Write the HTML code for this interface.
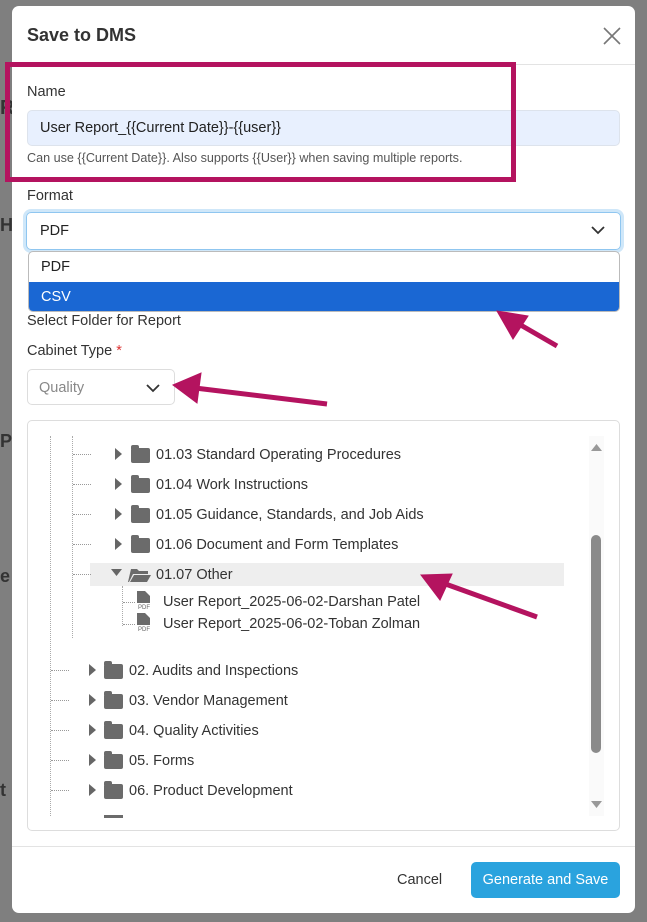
<!DOCTYPE html>
<html><head><meta charset="utf-8"><style>
*{box-sizing:border-box;margin:0;padding:0}
body{width:647px;height:922px;background:#7f7f7f;position:relative;overflow:hidden;font-family:"Liberation Sans",sans-serif;color:#222}
.a{position:absolute;white-space:nowrap}
.bg{position:absolute;left:0;font-size:15px;color:#333;font-weight:bold}
.modal{position:absolute;left:12px;top:6px;width:623px;height:907px;background:#fff;border-radius:7px}
.lbl{font-size:14.5px;color:#333}
.row{position:absolute;font-size:14.5px;color:#333;white-space:nowrap}
.tri{position:absolute;width:0;height:0;border-top:6px solid transparent;border-bottom:6px solid transparent;border-left:7px solid #666}
.fold{position:absolute;width:19px;height:15px;background:#6b6b6b;border-radius:2px}
.fold:before{content:"";position:absolute;left:0;top:-3px;width:8px;height:4px;background:#6b6b6b;border-radius:2px 2px 0 0}
.hd{position:absolute;border-top:1px dotted #999;width:18px}
</style></head><body>
<div class="bg" style="top:97px;font-size:20px">R</div>
<div class="bg" style="top:215px;font-size:18px">H</div>
<div class="bg" style="top:431px;font-size:18px">P</div>
<div class="bg" style="top:566px;font-size:18px">e</div>
<div class="bg" style="top:780px;font-size:18px">t</div>
<div class="modal"></div>
<div class="a" style="left:27px;top:25px;font-size:18px;font-weight:bold;color:#333">Save to DMS</div>
<svg class="a" style="left:603px;top:27px" width="18" height="18"><path d="M1 1L17 17M17 1L1 17" stroke="#777" stroke-width="1.6"/></svg>
<div class="a" style="left:12px;top:64px;width:623px;height:1px;background:#e3e3e3"></div>

<div class="a lbl" style="left:27px;top:84px">Name</div>
<div class="a" style="left:27px;top:110px;width:593px;height:36px;background:#e8f0fe;border:1px solid #dde3ec;border-radius:5px"></div>
<div class="a" style="left:40px;top:120px;font-size:14.5px;color:#222">User Report_{{Current Date}}-{{user}}</div>
<div class="a" style="left:27px;top:151px;font-size:12.6px;color:#555">Can use {{Current Date}}. Also supports {{User}} when saving multiple reports.</div>
<div class="a" style="left:5px;top:62px;width:511px;height:120px;border:5px solid #b4135f"></div>

<div class="a lbl" style="left:27px;top:188px">Format</div>
<div class="a" style="left:26px;top:212px;width:595px;height:38px;border:1px solid #8fc6f0;border-radius:5px;box-shadow:0 0 0 3px #cfe7f9"></div>
<div class="a" style="left:40px;top:223px;font-size:14.5px">PDF</div>
<svg class="a" style="left:591px;top:225px" width="14" height="10"><path d="M1 2L7 8L13 2" stroke="#333" stroke-width="1.8" fill="none"/></svg>
<div class="a" style="left:28px;top:251px;width:592px;height:61px;border:1px solid #bbb;border-radius:5px;background:#fff;overflow:hidden">
<div style="height:30px;padding:7px 12px;font-size:14.5px">PDF</div>
<div style="height:30px;padding:7px 12px;font-size:14.5px;background:#1a67d3;color:#fff">CSV</div></div>

<div class="a lbl" style="left:27px;top:313px">Select Folder for Report</div>
<div class="a lbl" style="left:27px;top:343px">Cabinet Type <span style="color:#d33">*</span></div>
<div class="a" style="left:27px;top:369px;width:148px;height:36px;border:1px solid #ddd;border-radius:5px"></div>
<div class="a" style="left:39px;top:380px;font-size:14.5px;color:#888">Quality</div>
<svg class="a" style="left:146px;top:383px" width="14" height="10"><path d="M1 2L7 8L13 2" stroke="#333" stroke-width="1.8" fill="none"/></svg>

<div class="a" style="left:27px;top:420px;width:593px;height:411px;border:1px solid #ddd;border-radius:5px;overflow:hidden">
<div class="a" style="left:561px;top:15px;width:15px;height:380px;background:#fafafa"></div>
<svg class="a" style="left:561px;top:20px" width="15" height="12"><path d="M2 10L7.5 3L13 10Z" fill="#999"/></svg>
<svg class="a" style="left:561px;top:378px" width="15" height="12"><path d="M2 2L7.5 9L13 2Z" fill="#999"/></svg>
<div class="a" style="left:563px;top:114px;width:10px;height:218px;background:#8a8a8a;border-radius:5px"></div>
<div class="a" style="left:22px;top:15px;height:380px;border-left:1px dotted #aaa"></div>
<div class="a" style="left:44px;top:15px;height:202px;border-left:1px dotted #aaa"></div>
<div class="a" style="left:62px;top:142px;width:474px;height:23px;background:#eeeeee"></div>
<div class="a" style="left:94px;top:165px;height:40px;border-left:1px dotted #aaa"></div>
</div>

<div class="hd" style="left:73px;top:454px"></div><div class="tri" style="left:115px;top:448px"></div><div class="fold" style="left:131px;top:448px"></div><div class="row" style="left:156px;top:447px">01.03 Standard Operating Procedures</div>
<div class="hd" style="left:73px;top:484px"></div><div class="tri" style="left:115px;top:478px"></div><div class="fold" style="left:131px;top:478px"></div><div class="row" style="left:156px;top:477px">01.04 Work Instructions</div>
<div class="hd" style="left:73px;top:514px"></div><div class="tri" style="left:115px;top:508px"></div><div class="fold" style="left:131px;top:508px"></div><div class="row" style="left:156px;top:507px">01.05 Guidance, Standards, and Job Aids</div>
<div class="hd" style="left:73px;top:544px"></div><div class="tri" style="left:115px;top:538px"></div><div class="fold" style="left:131px;top:538px"></div><div class="row" style="left:156px;top:537px">01.06 Document and Form Templates</div>
<div class="hd" style="left:73px;top:574px"></div>
<svg class="a" style="left:110px;top:567px" width="42" height="15"><path d="M1 2L12 2L6.5 9Z" fill="#666"/><path d="M21 2h6l2 2h9v3h-15l-4 8h-1z" fill="#6b6b6b"/><path d="M24 8h17l-4 7h-17z" fill="#6b6b6b"/></svg>
<div class="row" style="left:156px;top:567px">01.07 Other</div>
<div class="hd" style="left:123px;top:602px;width:12px"></div><div class="hd" style="left:123px;top:624px;width:12px"></div>
<svg class="a" style="left:136px;top:591px" width="18" height="20"><path d="M1 0h8l5 5v5H1z" fill="#6b6b6b"/><rect x="1" y="11" width="16" height="8" fill="#fff"/><text x="2" y="18" font-size="6" fill="#666" font-family="Liberation Sans">PDF</text><path d="M1 10h13v2H1z" fill="#6b6b6b"/></svg>
<svg class="a" style="left:136px;top:613px" width="18" height="20"><path d="M1 0h8l5 5v5H1z" fill="#6b6b6b"/><rect x="1" y="11" width="16" height="8" fill="#fff"/><text x="2" y="18" font-size="6" fill="#666" font-family="Liberation Sans">PDF</text><path d="M1 10h13v2H1z" fill="#6b6b6b"/></svg>
<div class="row" style="left:163px;top:594px">User Report_2025-06-02-Darshan Patel</div>
<div class="row" style="left:163px;top:616px">User Report_2025-06-02-Toban Zolman</div>
<div class="hd" style="left:51px;top:670px"></div><div class="tri" style="left:89px;top:664px"></div><div class="fold" style="left:104px;top:664px"></div><div class="row" style="left:129px;top:663px">02. Audits and Inspections</div>
<div class="hd" style="left:51px;top:700px"></div><div class="tri" style="left:89px;top:694px"></div><div class="fold" style="left:104px;top:694px"></div><div class="row" style="left:129px;top:693px">03. Vendor Management</div>
<div class="hd" style="left:51px;top:730px"></div><div class="tri" style="left:89px;top:724px"></div><div class="fold" style="left:104px;top:724px"></div><div class="row" style="left:129px;top:723px">04. Quality Activities</div>
<div class="hd" style="left:51px;top:760px"></div><div class="tri" style="left:89px;top:754px"></div><div class="fold" style="left:104px;top:754px"></div><div class="row" style="left:129px;top:753px">05. Forms</div>
<div class="hd" style="left:51px;top:790px"></div><div class="tri" style="left:89px;top:784px"></div><div class="fold" style="left:104px;top:784px"></div><div class="row" style="left:129px;top:783px">06. Product Development</div>
<div class="a" style="left:104px;top:815px;width:19px;height:3px;background:#6b6b6b"></div>

<div class="a" style="left:12px;top:846px;width:623px;height:1px;background:#e3e3e3"></div>
<div class="a" style="left:397px;top:872px;font-size:14.5px;color:#333">Cancel</div>
<div class="a" style="left:471px;top:862px;width:149px;height:36px;background:#2aa3de;border-radius:5px;color:#fff;font-size:14.5px;text-align:center;line-height:37px">Generate and Save</div>

<svg class="a" style="left:0;top:0" width="647" height="922">
<g stroke="#b4135f" stroke-width="5" fill="#b4135f">
<line x1="557" y1="346" x2="512" y2="320"/>
<polygon points="497,311 528,316 513,339" stroke-width="1"/>
<line x1="327" y1="404" x2="195" y2="388"/>
<polygon points="173,385 201,373 197,403" stroke-width="1"/>
<line x1="537" y1="617" x2="440" y2="582"/>
<polygon points="421,575 452,574 440,600" stroke-width="1"/>
</g></svg>
</body></html>
